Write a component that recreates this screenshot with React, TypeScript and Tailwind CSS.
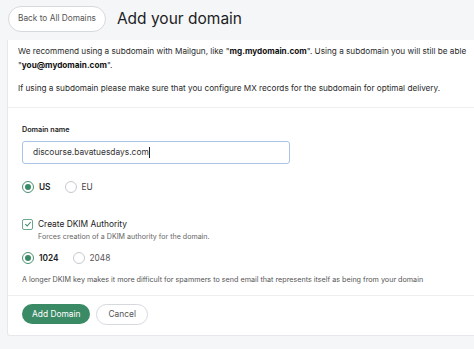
import React from "react";

export default function App() {
  return (
    <div
      className="w-[474px] h-[349px] overflow-hidden bg-[#f5f6f8] text-[#222]"
      style={{ fontFamily: "Inter, 'Noto Sans', sans-serif" }}
    >
      <div className="flex items-center h-[36px] pt-[1px] pl-[8px] gap-[11px]">
        <button className="h-[26px] px-[9px] rounded-full border border-[#d6d9de] bg-white text-[8.3px] text-[#555] whitespace-nowrap">
          Back to All Domains
        </button>
        <div className="text-[15.5px] text-[#1d1d1f] whitespace-nowrap">Add your domain</div>
      </div>
      <div className="mt-[4px] ml-[7px] w-[520px] bg-white border-l border-b border-[#e6e8eb] rounded-bl-[3px]">
        <div className="px-[10px] pt-[4px] pb-[12px] text-[8.2px] leading-[14px] text-[#2a2a2a] border-b border-[#eceef0]">
          <p className="whitespace-nowrap">
            We recommend using a subdomain with Mailgun, like "<b className="text-[#111]">mg.mydomain.com</b>". Using a subdomain you will still be able
          </p>
          <p className="whitespace-nowrap">
            "<b className="text-[#111]">you@mydomain.com</b>".
          </p>
          <p className="mt-[9px] whitespace-nowrap">
            If using a subdomain please make sure that you configure MX records for the subdomain for optimal delivery.
          </p>
        </div>
        <div className="px-[14px] pt-[17px] pb-[9px] border-b border-[#eceef0]">
          <div className="text-[7.2px] font-semibold text-[#222]">Domain name</div>
          <div className="mt-[5px] w-[268px] h-[23px] rounded-[3px] border border-[#a8c4e6] flex items-center px-[10px] text-[8.4px] text-[#333]">
            discourse.bavatuesdays.com<span className="inline-block w-px h-[11px] bg-[#222]" />
          </div>
          <div className="mt-[15px] flex items-center gap-[14px] h-[16px]">
            <label className="flex items-center gap-[5px]">
              <span className="w-[12px] h-[12px] rounded-full border border-[#4a8f70] flex items-center justify-center">
                <span className="w-[6px] h-[6px] rounded-full bg-[#3b8a66]" />
              </span>
              <span className="text-[8.3px] font-semibold">US</span>
            </label>
            <label className="flex items-center gap-[5px]">
              <span className="w-[12px] h-[12px] rounded-full border border-[#c5c9ce]" />
              <span className="text-[8.3px] text-[#444]">EU</span>
            </label>
          </div>
          <div className="mt-[22px] flex items-start gap-[5px]">
            <span className="mt-[2px] w-[11px] h-[11px] rounded-[2px] border border-[#6aa78b] flex items-center justify-center">
              <svg width="8" height="8" viewBox="0 0 8 8">
                <path d="M1.3 4.2 L3.2 6 L6.7 2" fill="none" stroke="#3b8a66" strokeWidth="1.1" />
              </svg>
            </span>
            <div>
              <div className="text-[8.4px] leading-[14px] text-[#222]">Create DKIM Authority</div>
              <div className="text-[7.1px] leading-[12px] text-[#666]">Forces creation of a DKIM authority for the domain.</div>
            </div>
          </div>
          <div className="mt-[7px] flex items-center gap-[14px] h-[16px]">
            <label className="flex items-center gap-[5px]">
              <span className="w-[12px] h-[12px] rounded-full border border-[#4a8f70] flex items-center justify-center">
                <span className="w-[6px] h-[6px] rounded-full bg-[#3b8a66]" />
              </span>
              <span className="text-[8.3px] font-semibold">1024</span>
            </label>
            <label className="flex items-center gap-[5px]">
              <span className="w-[12px] h-[12px] rounded-full border border-[#c5c9ce]" />
              <span className="text-[8.3px] text-[#555]">2048</span>
            </label>
          </div>
          <div className="mt-[9px] text-[7.2px] text-[#555] whitespace-nowrap">
            A longer DKIM key makes it more difficult for spammers to send email that represents itself as being from your domain
          </div>
        </div>
        <div className="px-[14px] pt-[8px] pb-[10px] flex items-center gap-[6px]">
          <button className="h-[20px] px-[10px] rounded-full bg-[#3b8a66] text-white text-[8.4px]">Add Domain</button>
          <button className="h-[21px] px-[11px] rounded-full border border-[#d6d9de] bg-white text-[#555] text-[8.4px]">Cancel</button>
        </div>
      </div>
    </div>
  );
}
